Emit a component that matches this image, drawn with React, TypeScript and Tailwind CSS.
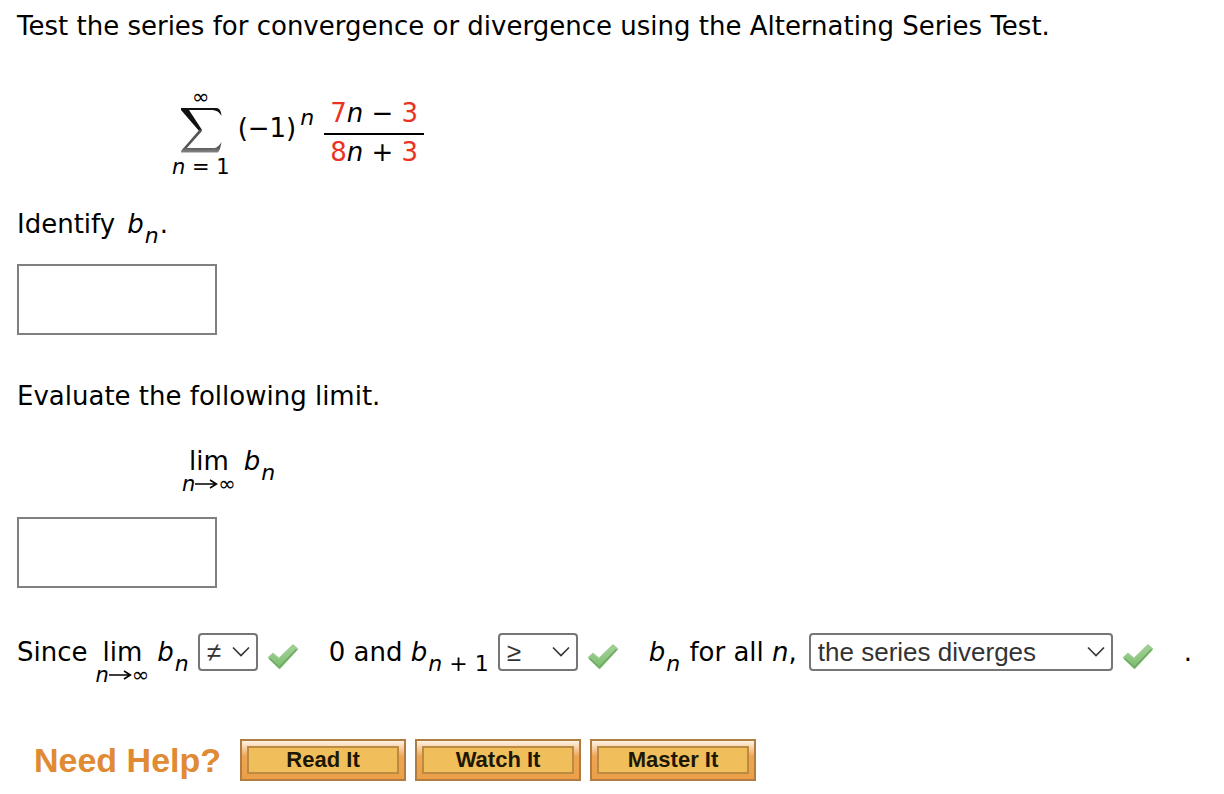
import type { ReactNode } from 'react'
import clsx from 'clsx'

const helpLinks = ['Read It', 'Watch It', 'Master It']

// subscript that hangs below the baseline
function Sub({ children }: { children: ReactNode }) {
  return <sub className="static mx-px align-[-10px] text-[22px] leading-0">{children}</sub>
}

function SigmaIcon() {
  return (
    <svg width="42" height="46" viewBox="0 0 42 46" aria-hidden="true">
      <defs>
        <linearGradient id="sigma-foot" x1="0" y1="0" x2="0" y2="1">
          <stop offset="0" stopColor="#222" />
          <stop offset="1" stopColor="#888" />
        </linearGradient>
      </defs>
      <path d="M1 1H36C39 1 41 3 41.500 9C39 4.500 36 3 30 3H9L22 23L20 25L1 3Z" fill="#111" />
      <path d="M20 22L22 24L6 42L1 44Z" fill="#555" />
      <path d="M1 44.500L4 41H33C37 41 39 39 41.500 35L40 42L38 45.500H1Z" fill="url(#sigma-foot)" />
    </svg>
  )
}

function CheckIcon() {
  return (
    <svg width="32" height="28" viewBox="0 0 32 28" role="img" aria-label="Correct">
      <defs>
        <linearGradient id="check" x1="0" y1="0" x2="0" y2="1">
          <stop offset="0" stopColor="#a3d296" />
          <stop offset="1" stopColor="#7cbd70" />
        </linearGradient>
      </defs>
      <path
        d="M1.500 14.500L6 10.500L12 15.500L26 2L30.500 6L12.500 25.500Z"
        fill="url(#check)"
        stroke="#9ccb92"
        strokeWidth="1.500"
        strokeLinejoin="round"
      />
      <path
        d="M2.500 15.500L12.500 24.500L29.500 6.500"
        fill="none"
        stroke="#69a75f"
        strokeWidth="1.500"
        strokeLinejoin="round"
      />
    </svg>
  )
}

// lim with n→∞ written underneath
function Limit() {
  return (
    <span className="inline-flex flex-col items-center">
      <span className="leading-[32px]">lim</span>
      <span className="flex items-center text-[21px] leading-[14px]">
        <i>n</i>
        <svg width="23" height="14" viewBox="0 0 23 14" role="img" aria-label="→">
          <path d="M0 7H21M15 3L21.500 7L15 11" fill="none" stroke="#000" strokeWidth="1.500" />
        </svg>
        <span>∞</span>
      </span>
    </span>
  )
}

type AnswerSelectProps = {
  label: string
  options: string[]
  className: string
}

function AnswerSelect({ label, options, className }: AnswerSelectProps) {
  return (
    <span className={clsx('relative inline-block shrink-0', className)}>
      <select
        aria-label={label}
        className="h-[38px] w-full appearance-none rounded-[4px] border-2 border-[#767676] bg-white pr-7 pl-[7px] font-['Liberation_Sans',sans-serif] text-[26px] leading-[32px] text-[#333]"
      >
        {options.map((option) => (
          <option key={option}>{option}</option>
        ))}
      </select>
      <svg
        className="pointer-events-none absolute top-[13px] right-2"
        width="18"
        height="12"
        viewBox="0 0 18 12"
        aria-hidden="true"
      >
        <path d="M1 1.500L9 9.500L17 1.500" fill="none" stroke="#333" strokeWidth="1.600" />
      </svg>
    </span>
  )
}

function AnswerBox({ label }: { label: string }) {
  return <input type="text" aria-label={label} className="block h-[71px] w-[200px] border-2 border-[#808080] px-2" />
}

export default function App() {
  return (
    <main className="min-h-screen bg-white px-[17px] pt-[10px] pb-3 font-['DejaVu_Sans',sans-serif] text-[26px] leading-[32px] text-black">
      <p>Test the series for convergence or divergence using the Alternating Series Test.</p>

      {/* serie */}
      <div className="mt-[45px] ml-[155px] flex items-center">
        <div className="flex flex-col items-center text-[21px]">
          <span className="leading-[20px]">∞</span>
          <SigmaIcon />
          <span className="leading-[28px]">
            <i>n</i> = 1
          </span>
        </div>
        <span className="ml-2 pb-3">
          (−1)<sup className="static ml-1 align-[12px] text-[22px] leading-0 italic">n</sup>
        </span>
        <div className="ml-[10px] flex flex-col pb-1 text-center">
          <span className="border-b-2 border-black px-[6px] pb-1">
            <span className="text-[#ea3323]">7</span>
            <i>n</i> − <span className="text-[#ea3323]">3</span>
          </span>
          <span className="px-[6px] pt-px">
            <span className="text-[#ea3323]">8</span>
            <i>n</i> + <span className="text-[#ea3323]">3</span>
          </span>
        </div>
      </div>

      <p className="mt-[27px] flex gap-3">
        <span>Identify</span>
        <span>
          <i>b</i>
          <Sub>
            <i>n</i>
          </Sub>
          .
        </span>
      </p>
      <div className="mt-6">
        <AnswerBox label="b sub n" />
      </div>

      <p className="mt-[45px]">Evaluate the following limit.</p>
      <div className="mt-[33px] ml-[165px] flex h-12 items-start gap-2">
        <Limit />
        <span>
          <i>b</i>
          <Sub>
            <i>n</i>
          </Sub>
        </span>
      </div>
      <div className="mt-6">
        <AnswerBox label="Value of the limit" />
      </div>

      {/* conclusion con las respuestas elegidas */}
      <div className="mt-[45px] flex h-[52px] items-start whitespace-nowrap">
        <div className="flex items-start gap-2 pt-[3px]">
          <span>Since</span>
          <Limit />
          <span>
            <i>b</i>
            <Sub>
              <i>n</i>
            </Sub>
          </span>
        </div>
        <div className="ml-2 flex items-start gap-[9px]">
          <AnswerSelect label="Limit comparison" options={['≠', '=']} className="w-[60px]" />
          <span className="pt-[10px]">
            <CheckIcon />
          </span>
        </div>
        <span className="ml-[30px] pt-[3px]">
          0 and <i>b</i>
          <Sub>
            <i>n</i> + 1
          </Sub>
        </span>
        <div className="ml-2 flex items-start gap-[9px]">
          <AnswerSelect label="Term comparison" options={['≥', '≤', 'n/a']} className="w-[80px]" />
          <span className="pt-[10px]">
            <CheckIcon />
          </span>
        </div>
        <span className="ml-[30px] pt-[3px]">
          <i>b</i>
          <Sub>
            <i>n</i>
          </Sub>{' '}
          for all <i>n</i>,
        </span>
        <div className="ml-3 flex items-start gap-[9px]">
          <AnswerSelect
            label="Conclusion"
            options={['the series diverges', 'the series converges']}
            className="w-[304px]"
          />
          <span className="pt-[10px]">
            <CheckIcon />
          </span>
        </div>
        <span className="ml-[30px] pt-[3px]">.</span>
      </div>

      <div className="mt-[54px] ml-[17px] flex items-center gap-[9px] font-['Liberation_Sans',sans-serif] font-bold">
        <h2 className="mr-[10px] text-[34px] text-[#e08a33]">Need Help?</h2>
        {helpLinks.map((link) => (
          <button
            key={link}
            type="button"
            className="h-[42px] w-[166px] border-2 border-[#b07c40] bg-linear-to-b from-[#fff3e6] via-[#eea552] via-40% to-[#ec9f48] p-[5px]"
          >
            <span className="flex h-full items-center justify-center border-2 border-[#bb8b42] bg-[#f1be5c] text-[22px] leading-6 text-[#1c1804]">
              {link}
            </span>
          </button>
        ))}
      </div>
    </main>
  )
}
